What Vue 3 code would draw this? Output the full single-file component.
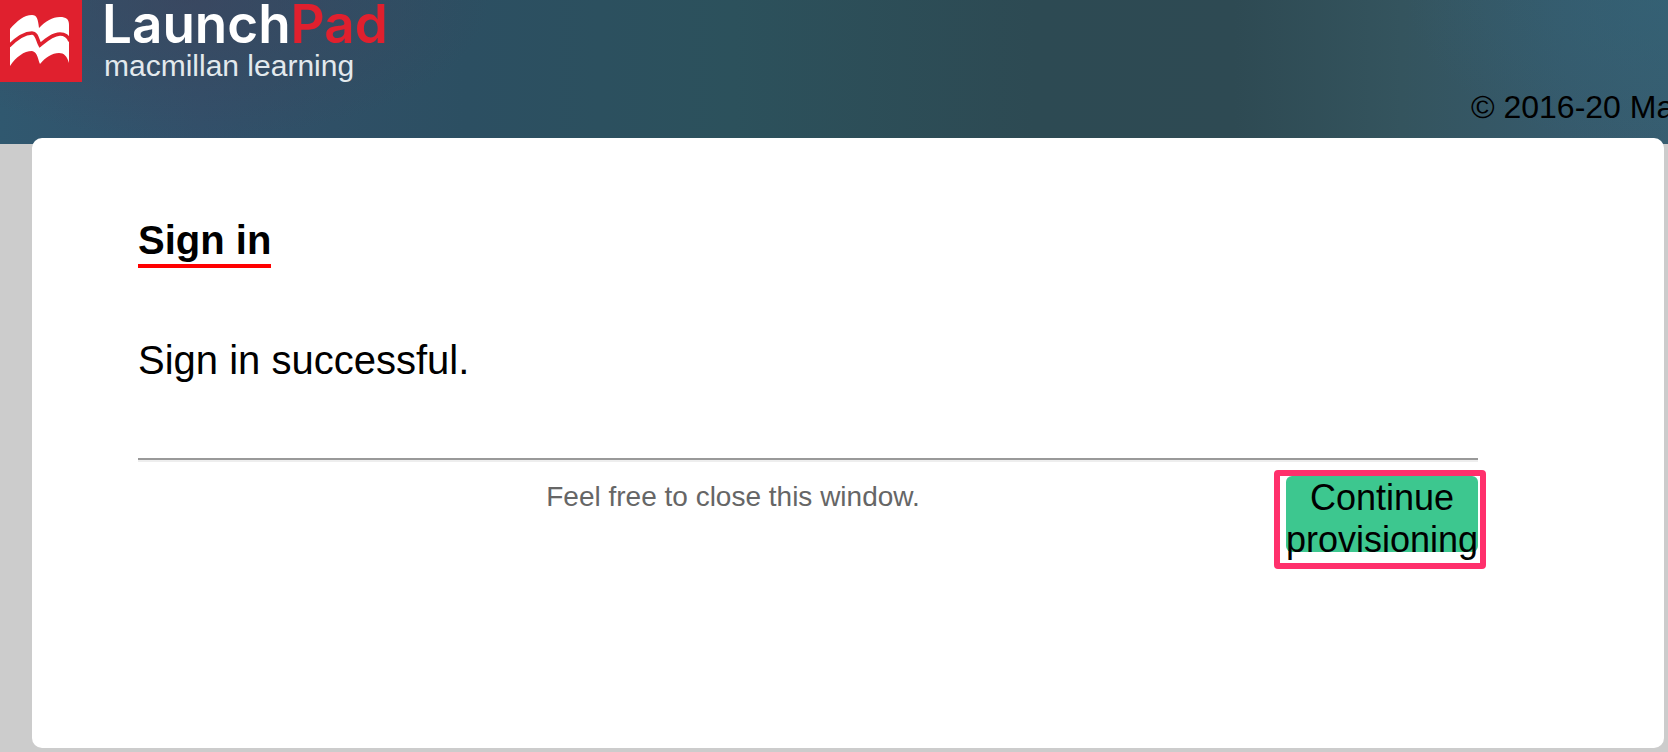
<script setup>
const product = { first: 'Launch', second: 'Pad', owner: 'macmillan learning' }
</script>

<template>
  <div class="page">
    <header class="banner">
      <div class="brand">
        <svg class="mark" viewBox="0 0 82 82" aria-hidden="true">
          <rect width="82" height="82" fill="#e0202e" />
          <path
            fill="#fff"
            d="M10 29C17 21 24 15 32 15C37 15 38 19 39 28C46 21 52 17 60 17C66 17 69 19 69 25V63C67 56 64 53 59 53C52 53 46 57 40 64C38 61 38 52 32 51C24 51 16 57 10 66Z"
          />
          <path
            fill="none"
            stroke="#e0202e"
            stroke-width="3.6"
            d="M9 46C17 38 24 33 32 33C37 33 37 39 40 45C46 40 53 34 60 34C65 34 68 36 70 41"
          />
        </svg>
        <div class="wordmark">
          <span class="name">{{ product.first }}<span class="accent">{{ product.second }}</span></span>
          <span class="owner">{{ product.owner }}</span>
        </div>
      </div>
      <p class="copyright">© 2016-20 Ma</p>
    </header>

    <main class="card">
      <h1>Sign in</h1>
      <p class="message">Sign in successful.</p>
      <hr />
      <div class="actions">
        <p class="note">Feel free to close this window.</p>
        <div class="highlight">
          <button type="button">Continue provisioning</button>
        </div>
      </div>
    </main>
  </div>
</template>

<style>
body {
  margin: 0;
  background: #ccc;
}
</style>

<style scoped>
.page {
  box-sizing: border-box;
  min-height: 100vh;
  padding-bottom: 4px;
  display: flex;
  flex-direction: column;
  overflow: hidden;
  background: #ccc;
  color: #000;
  font-family: "Liberation Sans", Arial, Helvetica, sans-serif;
}

.banner {
  height: 144px;
  display: flex;
  justify-content: space-between;
  background:
    radial-gradient(ellipse 300px 140px at 190px 0, rgba(62, 66, 90, 0.6), transparent),
    radial-gradient(ellipse 260px 150px at 100% 0, rgba(50, 100, 120, 0.5), transparent),
    linear-gradient(90deg, #30586f 0, #32506a 12%, #2c4f62 28%, #2c515c 44%, #2d4a53 62%, #2e4a53 74%, #34545e 84%, #365a6c 94%, #375d70 100%);
}

.brand {
  display: flex;
  gap: 22px;
}

.mark {
  width: 82px;
  height: 82px;
}

.wordmark {
  display: flex;
  flex-direction: column;
  white-space: nowrap;
}

.name {
  margin-left: -2px;
  color: #fff;
  font: 600 53px/48px Inter, sans-serif;
}

.accent {
  color: #e0202e;
}

.owner {
  color: #e3e9ed;
  font-size: 30px;
  line-height: 36px;
}

.copyright {
  width: 197px;
  margin: 88px 0 0;
  font-size: 32px;
  line-height: 38px;
  white-space: nowrap;
}

.card {
  flex: 1;
  margin: -6px 4px 0 32px;
  padding: 78px 186px 24px 106px;
  border-radius: 10px;
  background: #fff;
}

h1 {
  width: fit-content;
  margin: 0;
  border-bottom: 4px solid #f00;
  font-size: 40px;
  line-height: 48px;
}

.message {
  margin: 68px 0 74px;
  font-size: 40px;
  line-height: 48px;
}

hr {
  margin: 0;
  border: 0;
  border-top: 2px solid #999;
  border-bottom: 2px solid #eee;
}

.actions {
  margin: 8px -8px 0 0;
  display: flex;
  align-items: flex-start;
}

.note {
  flex: 1;
  margin: 10px 0 0;
  padding-left: 54px;
  color: #666;
  font-size: 28px;
  line-height: 34px;
  text-align: center;
}

.highlight {
  padding: 0 2px 11px 6px;
  border: 6px solid #ff306c;
  border-radius: 4px;
}

button {
  width: 192px;
  height: 76px;
  padding: 1px 0 0;
  display: flex;
  align-items: flex-start;
  justify-content: center;
  border: 0;
  border-radius: 6px;
  background: #3dc78f;
  color: #000;
  font-family: inherit;
  font-size: 36px;
  line-height: 42px;
  text-align: center;
  cursor: pointer;
}
</style>
